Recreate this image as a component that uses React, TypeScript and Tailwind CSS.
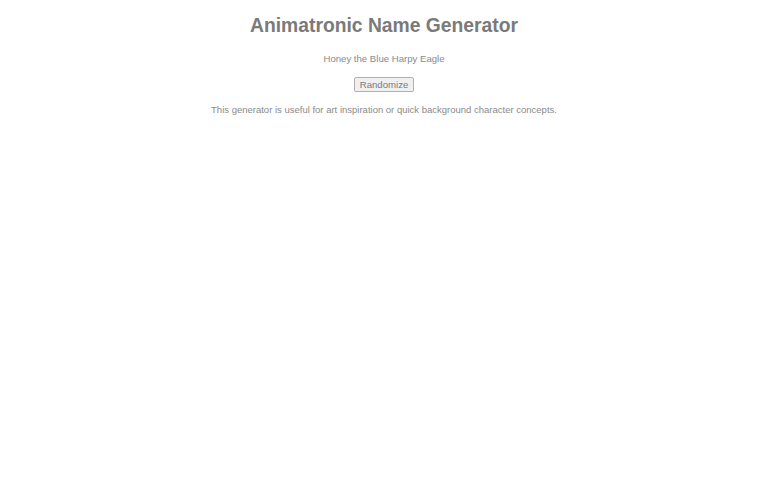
export default function App() {
  return (
    <div className="min-h-screen bg-white font-['Liberation_Sans',Arial,sans-serif] text-[#8a8a8a]">
      <div className="flex flex-col items-center pt-[14px] text-center">
        <h1 className="text-[19.3px] font-bold leading-[24px] text-[#7a7a7a]">
          Animatronic Name Generator
        </h1>
        <p className="mt-[15px] text-[9.6px] leading-[12px]">Honey the Blue Harpy Eagle</p>
        <button className="mt-[12px] rounded-[2px] border border-[#b0b0b0] bg-[#f0f0f0] px-[5px] text-[9.6px] leading-[13px] text-[#7a7a7a]">
          Randomize
        </button>
        <p className="mt-[12px] text-[9.5px] leading-[12px]">
          This generator is useful for art inspiration or quick background character concepts.
        </p>
      </div>
    </div>
  );
}
